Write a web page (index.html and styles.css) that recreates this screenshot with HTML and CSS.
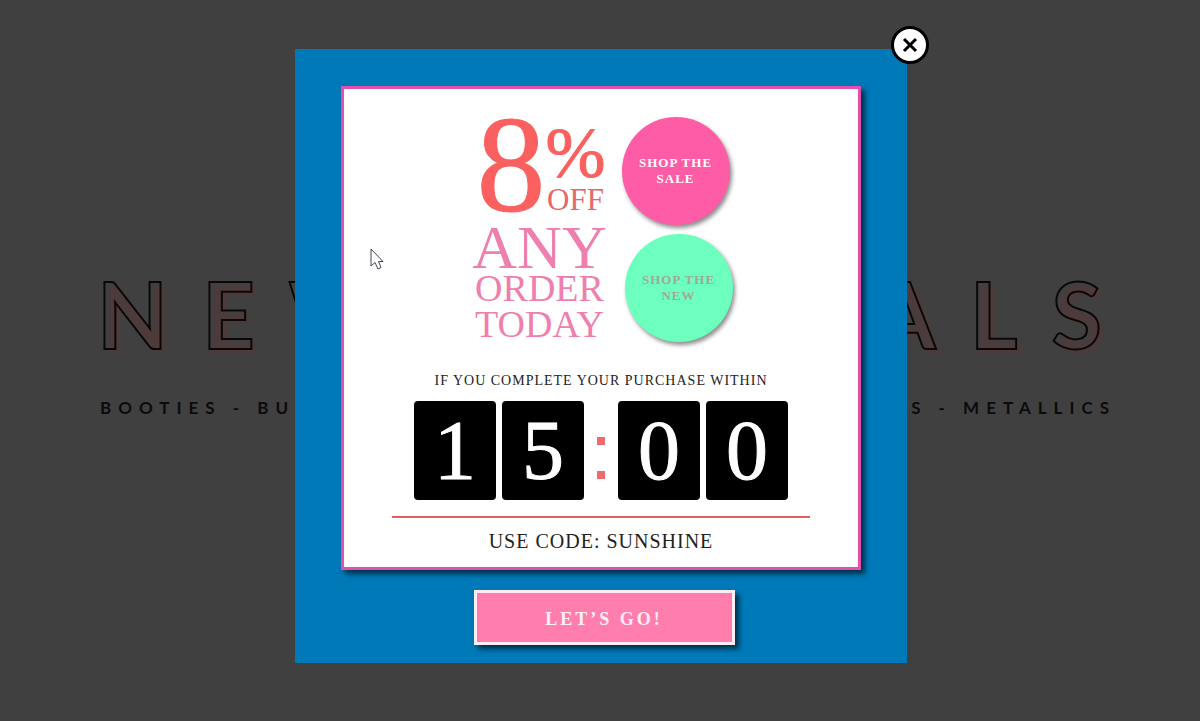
FILE: index.html
```html
<!DOCTYPE html>
<html lang="en">
<head>
    <meta charset="UTF-8">
    <meta name="viewport" content="width=device-width, initial-scale=1.0">
    <title>New Arrivals</title>
    <link rel="stylesheet" href="styles.css">
</head>
<body>
    <main class="hero">
        <h1><span>NEW</span> <span>ARRIVALS</span></h1>
        <p><span>BOOTIES - BUCKLES</span> <span>HEELS - METALLICS</span></p>
    </main>

    <div class="overlay">
        <div class="modal" role="dialog" aria-label="Today's offer">
            <button class="close" type="button" aria-label="Close">
                <svg viewBox="0 0 16 16" width="16" height="16"><path d="M2 2L14 14M14 2L2 14"/></svg>
            </button>

            <div class="card">
                <div class="offer">
                    <div class="deal">
                        <div class="discount">
                            <span class="number">8</span>
                            <div class="unit">
                                <span class="percent">%</span>
                                <span class="off">OFF</span>
                            </div>
                        </div>
                        <span class="any">ANY</span>
                        <span class="order">ORDER</span>
                        <span class="today">TODAY</span>
                    </div>
                    <div class="links">
                        <a class="circle sale" href="#">SHOP THE<br>SALE</a>
                        <a class="circle new" href="#">SHOP THE<br>NEW</a>
                    </div>
                </div>

                <p class="within">IF YOU COMPLETE YOUR PURCHASE WITHIN</p>

                <div class="timer">
                    <span class="digit">1</span>
                    <span class="digit">5</span>
                    <div class="colon"><i></i><i></i></div>
                    <span class="digit">0</span>
                    <span class="digit">0</span>
                </div>

                <p class="code">USE CODE: SUNSHINE</p>
            </div>

            <button class="go" type="button">LET’S GO!</button>

            <svg class="cursor" viewBox="0 0 14 22" width="14" height="22"><path d="M1 1V18L5 14.5L8 21L11 19.5L8.5 13.5H13Z"/></svg>
        </div>
    </div>
</body>
</html>
```

FILE: styles.css
```css
* {
    box-sizing: border-box;
}

body {
    margin: 0;
    min-height: 100vh;
    background-color: #404040;
    font-family: "Liberation Serif", "Times New Roman", serif;
}

h1,
p {
    margin: 0;
}

/* Page behind the popup */
.hero {
    padding: 259px 84px 0 100px;
    font-family: Lato, sans-serif;
}

.hero h1,
.hero p {
    display: flex;
    justify-content: space-between;
    white-space: nowrap;
}

.hero h1 {
    font-size: 92px;
    line-height: 110px;
    font-weight: 700;
    letter-spacing: 34px;
    margin-left: -3px;
    margin-right: -20px;
    color: transparent;
    -webkit-text-stroke: 2px #0c0707;
    text-shadow: 5px 4px 0 #4d3b3b;
}

.hero p {
    margin-top: 27px;
    font-size: 17px;
    line-height: 24px;
    font-weight: 700;
    letter-spacing: 7px;
    color: #0b0b0b;
}

.overlay {
    position: absolute;
    top: 0;
    left: 0;
    width: 100%;
    padding: 49px 16px 49px 18px;
    display: flex;
    justify-content: center;
}

.modal {
    position: relative;
    width: 612px;
    padding: 37px 46px 18px 46px;
    background-color: #0079b8;
    display: flex;
    flex-direction: column;
    align-items: center;
}

.close {
    position: absolute;
    top: -23px;
    right: -22px;
    width: 38px;
    height: 38px;
    padding: 0;
    border: 3px solid #000;
    border-radius: 50%;
    background-color: #fff;
    display: flex;
    align-items: center;
    justify-content: center;
    cursor: pointer;
}

.close path {
    fill: none;
    stroke: #000;
    stroke-width: 3;
}

.card {
    width: 100%;
    padding: 28px 48px 14px;
    border: 3px solid #e24fae;
    background-color: #fff;
    box-shadow: 4px 4px 5px rgba(0, 0, 0, 0.6);
    display: flex;
    flex-direction: column;
    align-items: center;
}

.offer {
    display: flex;
    gap: 16px;
    margin-left: 4px;
}

.deal {
    width: 132px;
    display: flex;
    flex-direction: column;
    align-items: center;
    color: #ef7fae;
}

.discount {
    width: 100%;
    height: 107px;
    display: flex;
    justify-content: flex-end;
    color: #f9605f;
}

.number {
    font-size: 138px;
    line-height: 96px;
    -webkit-text-stroke: 1px #f9605f;
}

.unit {
    display: flex;
    flex-direction: column;
    align-items: center;
}

.percent {
    font-size: 72px;
    line-height: 72px;
    -webkit-text-stroke: 1px #f9605f;
}

.off {
    font-size: 31px;
    line-height: 22px;
    color: #e5696c;
}

.any {
    font-size: 62px;
    line-height: 46px;
}

.order,
.today {
    font-size: 38px;
    line-height: 36px;
}

.links {
    width: 111px;
    display: flex;
    flex-direction: column;
    gap: 9px;
}

.circle {
    width: 108px;
    height: 108px;
    border-radius: 50%;
    box-shadow: 2px 3px 4px rgba(0, 0, 0, 0.45);
    display: flex;
    align-items: center;
    justify-content: center;
    text-align: center;
    text-decoration: none;
    font-size: 13px;
    line-height: 16px;
    font-weight: 700;
    letter-spacing: 1px;
}

.sale {
    background-color: #ff5ca8;
    color: #fff;
}

.new {
    align-self: flex-end;
    background-color: #6cffbe;
    color: #a3a79b;
}

.within {
    margin-top: 29px;
    font-size: 14px;
    line-height: 20px;
    letter-spacing: 1px;
    color: #222;
    white-space: nowrap;
}

.timer {
    margin-top: 10px;
    display: flex;
    gap: 6px;
}

.digit {
    width: 82px;
    height: 99px;
    border-radius: 4px;
    background-color: #000;
    color: #fff;
    font-size: 84px;
    line-height: 99px;
    text-align: center;
    -webkit-text-stroke: 1px #fff;
}

.colon {
    width: 22px;
    display: flex;
    flex-direction: column;
    align-items: center;
    justify-content: center;
    gap: 26px;
    padding-top: 14px;
}

.colon i {
    width: 8px;
    height: 8px;
    background-color: #ee6c6e;
}

.code {
    width: 418px;
    margin-top: 16px;
    padding-top: 11px;
    border-top: 2px solid #e0605f;
    font-size: 20px;
    line-height: 24px;
    letter-spacing: 1px;
    text-align: center;
    color: #222;
}

.go {
    width: 261px;
    height: 55px;
    margin-top: 20px;
    margin-left: 6px;
    padding: 4px 0 0;
    border: 3px solid #fdeef6;
    background-color: #ff7eae;
    box-shadow: 4px 4px 5px rgba(0, 0, 0, 0.6);
    font-family: inherit;
    font-size: 18px;
    font-weight: 700;
    letter-spacing: 3px;
    color: #fdeef6;
    cursor: pointer;
}

.cursor {
    position: absolute;
    top: 199px;
    left: 75px;
}

.cursor path {
    fill: #fff;
    stroke: #45454f;
}
```
